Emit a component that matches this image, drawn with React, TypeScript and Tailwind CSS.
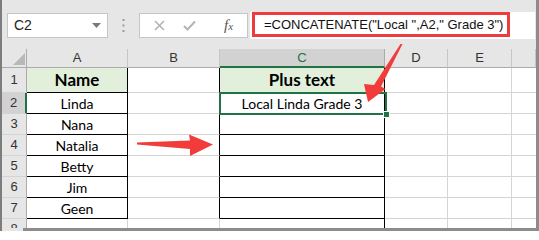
import React from "react";

// ── Data ──────────────────────────────────────────────────────────────────────

const ROWS = [
  { n: 1, a: "Name", c: "Plus text" },
  { n: 2, a: "Linda", c: "Local Linda Grade 3" },
  { n: 3, a: "Nana", c: "" },
  { n: 4, a: "Natalia", c: "" },
  { n: 5, a: "Betty", c: "" },
  { n: 6, a: "Jim", c: "" },
  { n: 7, a: "Geen", c: "" },
];

const COLS = ["A", "B", "C", "D", "E", ""];

// ── Formula bar ───────────────────────────────────────────────────────────────

function FormulaBar() {
  return (
    <div className="h-[49px] bg-[#e6e6e6] flex items-start pt-[13px] pl-[5px] font-['Liberation_Sans',sans-serif]">
      {/* Name box */}
      <div className="w-[101px] h-[25px] bg-white border border-[#c6c6c6] flex items-center justify-between pl-[6px] pr-[6px] text-[14px] text-[#222]">
        <span>C2</span>
        <svg width="9" height="5" viewBox="0 0 9 5">
          <polygon points="0,0 9,0 4.5,5" fill="#7a7a7a" />
        </svg>
      </div>

      {/* Separator dots */}
      <div className="w-[31px] h-[25px] flex items-center justify-center">
        <svg width="3" height="13" viewBox="0 0 3 13">
          <rect x="0.5" y="0" width="2" height="2" fill="#9a9a9a" />
          <rect x="0.5" y="5.5" width="2" height="2" fill="#9a9a9a" />
          <rect x="0.5" y="11" width="2" height="2" fill="#9a9a9a" />
        </svg>
      </div>

      {/* Cancel / Enter / fx */}
      <div className="w-[109px] h-[25px] bg-white border border-[#c6c6c6] flex items-center pl-[14px] gap-[18px]">
        <svg width="11" height="11" viewBox="0 0 11 11">
          <path d="M1 1 L10 10 M10 1 L1 10" stroke="#b4b4b4" strokeWidth="1.6" />
        </svg>
        <svg width="13" height="11" viewBox="0 0 13 11">
          <path d="M1 6 L4.5 9.5 L12 1.5" stroke="#b4b4b4" strokeWidth="2" fill="none" />
        </svg>
        <span className="ml-[10px] font-['Liberation_Serif',serif] italic text-[15px] text-[#555] leading-none">
          f<span className="text-[11px]">x</span>
        </span>
      </div>

      {/* Formula input */}
      <div className="ml-[2px] -mt-[1px] w-[285px] h-[27px] bg-white pl-[2px]">
        <div className="w-[258px] h-[25px] border-[3px] border-[#ee3b3b] flex items-center pl-[9px] text-[13px] text-[#111] whitespace-nowrap">
          =CONCATENATE("Local ",A2," Grade 3")
        </div>
      </div>
    </div>
  );
}

// ── Sheet ─────────────────────────────────────────────────────────────────────

function Sheet() {
  return (
    <div className="relative grid grid-cols-[25px_101px_92px_165px_63px_64px_1fr] grid-rows-[19px_25px_repeat(6,21px)_9px] font-[Lato,sans-serif]">
      {/* Column headers */}
      <div className="bg-[#e6e6e6] border-r border-b border-[#ababab] relative">
        <svg className="absolute left-[11px] top-[4px]" width="12" height="12" viewBox="0 0 12 12">
          <polygon points="12,0 12,12 0,12" fill="#b8b8b8" />
        </svg>
      </div>
      {COLS.map((c, i) =>
        c === "C" ? (
          <div
            key={i}
            className="bg-[#d2d2d2] border-r border-[#ababab] border-b-2 border-b-[#217346] flex items-center justify-center text-[13px] text-[#217346] font-['Liberation_Sans',sans-serif]"
          >
            {c}
          </div>
        ) : (
          <div
            key={i}
            className="bg-[#e6e6e6] border-r border-b border-r-[#c6c6c6] border-b-[#ababab] flex items-center justify-center text-[13px] text-[#333] font-['Liberation_Sans',sans-serif]"
          >
            {c}
          </div>
        )
      )}

      {/* Body rows */}
      {ROWS.map((r) => {
        const head = r.n === 1;
        const sel = r.n === 2;
        return (
          <React.Fragment key={r.n}>
            <div
              className={
                sel
                  ? "bg-[#d2d2d2] border-b border-b-[#d4d4d4] border-r-2 border-r-[#217346] flex items-center justify-center text-[13px] text-[#333] font-['Liberation_Sans',sans-serif]"
                  : "bg-[#e6e6e6] border-b border-r border-b-[#d4d4d4] border-r-[#ababab] flex items-center justify-center text-[13px] text-[#333] font-['Liberation_Sans',sans-serif]"
              }
            >
              {r.n}
            </div>
            <div
              className={
                head
                  ? "bg-[#e2efda] border-r border-b border-black flex items-center justify-center text-[17px] font-bold text-black"
                  : "bg-white border-r border-b border-black flex items-center justify-center text-[14px] text-black"
              }
            >
              {r.a}
            </div>
            <div className="bg-white border-r border-b border-r-black border-b-[#d4d4d4]" />
            <div
              className={
                head
                  ? "bg-[#e2efda] border-r border-b border-black flex items-center justify-center text-[17px] font-bold text-black"
                  : "bg-white border-r border-b border-black flex items-center justify-center text-[14px] text-black whitespace-nowrap"
              }
            >
              {r.c}
            </div>
            <div className="bg-white border-r border-b border-[#d4d4d4]" />
            <div className="bg-white border-r border-b border-[#d4d4d4]" />
            <div className="bg-white border-b border-[#d4d4d4]" />
          </React.Fragment>
        );
      })}

      {/* Row 8, cut off at the bottom */}
      <div className="bg-[#e6e6e6] border-r border-[#ababab] flex justify-center overflow-hidden text-[13px] text-[#333] font-['Liberation_Sans',sans-serif] leading-[14px] pt-[3px]">
        8
      </div>
      <div className="bg-white border-r border-[#d4d4d4]" />
      <div className="bg-white border-r border-[#d4d4d4]" />
      <div className="bg-white border-r border-black" />
      <div className="bg-white border-r border-[#d4d4d4]" />
      <div className="bg-white border-r border-[#d4d4d4]" />
      <div className="bg-white" />

      {/* Active cell C2 */}
      <div className="absolute left-[217px] top-[43px] w-[168px] h-[23px] border-2 border-[#217346]">
        <div className="absolute -right-[5px] -bottom-[5px] w-[7px] h-[7px] bg-[#217346] border border-white" />
      </div>
    </div>
  );
}

// ── App ───────────────────────────────────────────────────────────────────────

export default function App() {
  return (
    <div className="relative w-[539px] h-[231px] overflow-hidden bg-[#e6e6e6] border-l-2 border-l-[#7d7d7d] border-r-[3px] border-r-[#8c8c8c]">
      <FormulaBar />
      <Sheet />
      {/* Window shadow along the bottom */}
      <div className="ml-[21px] h-[3px] bg-[#8c8c8c]" />

      {/* Red callout arrows */}
      <svg className="absolute -left-[2px] top-0 pointer-events-none" width="539" height="231" viewBox="0 0 539 231">
        <polygon points="137,142.5 190,140.5 189,134.5 213,144.5 190,156 190,149 137,144.5" fill="#f23b3b" />
        <polygon points="402.5,44 381,86.5 385.5,89 368,102 364,84 374,85 400.5,44" fill="#f23b3b" />
      </svg>
    </div>
  );
}
